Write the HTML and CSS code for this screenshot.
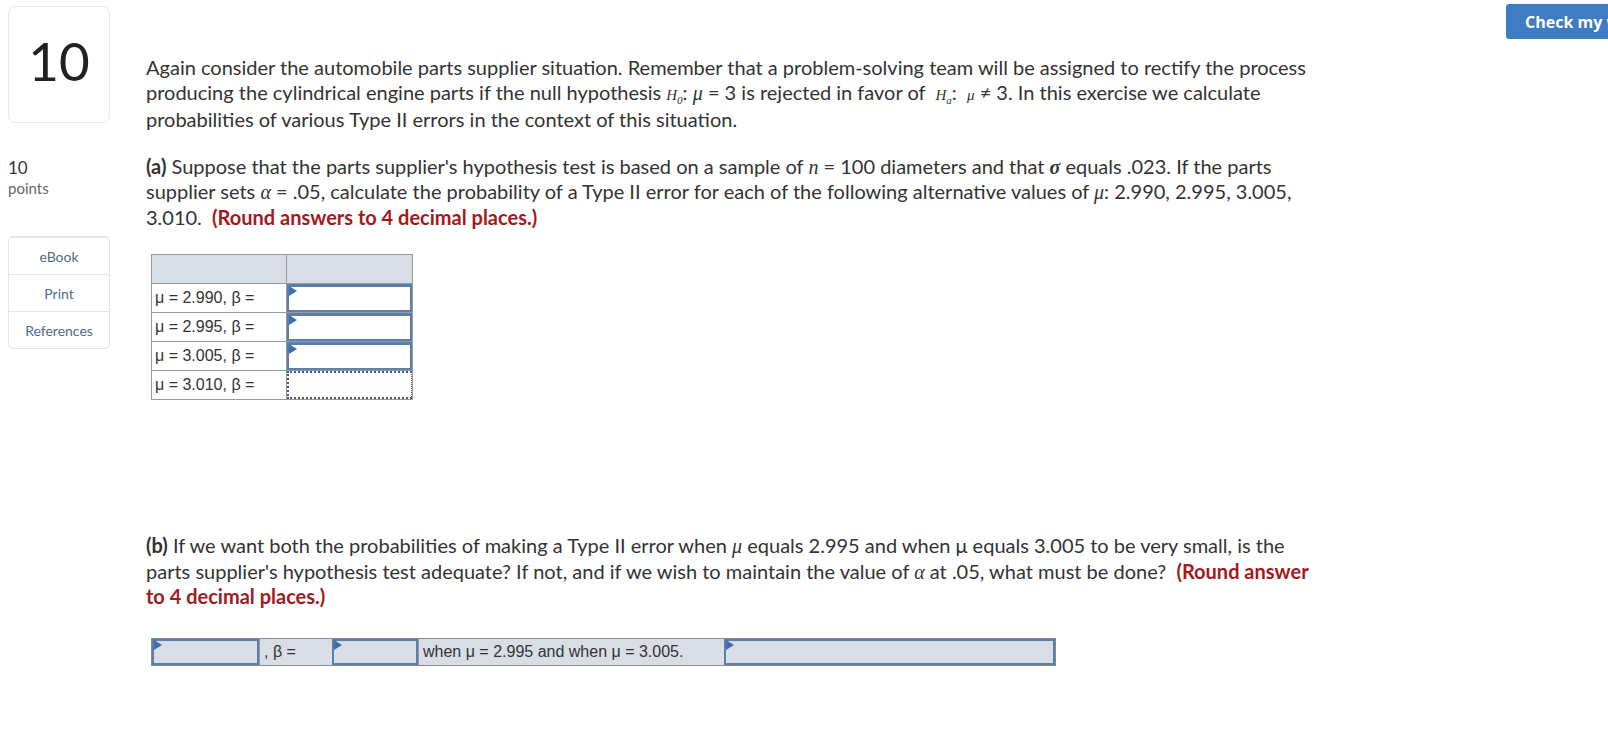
FILE: index.html
```html
<!DOCTYPE html>
<html>
<head>
<meta charset="utf-8">
<link rel="stylesheet" href="styles.css">
</head>
<body>
<button class="check-btn">Check my work</button>
<div class="page">
  <aside class="side">
    <div class="qnum">10</div>
    <div class="points"><div class="pts-num">10</div><div class="pts-label">points</div></div>
    <div class="tools">
      <div class="tool">eBook</div>
      <div class="tool">Print</div>
      <div class="tool">References</div>
    </div>
  </aside>
  <main class="main">
    <p class="para intro">Again consider the automobile parts supplier situation. Remember that a problem-solving team will be assigned to rectify the process producing the cylindrical engine parts if the null hypothesis <i class="h">H<sub>0</sub></i>: <i>μ</i> = 3 is rejected in favor of &nbsp;<i class="h">H<sub>a</sub></i>: &nbsp;<i class="mu-s">μ</i> ≠ 3. In this exercise we calculate probabilities of various Type II errors in the context of this situation.</p>
    <p class="para pa"><b>(a)</b> Suppose that the parts supplier's hypothesis test is based on a sample of <i>n</i> = 100 diameters and that <b><i>σ</i></b> equals .023. If the parts supplier sets <i>α</i> = .05, calculate the probability of a Type II error for each of the following alternative values of <i>μ</i>: 2.990, 2.995, 3.005, 3.010. &nbsp;<b class="red">(Round answers to 4 decimal places.)</b></p>
    <table class="tbl">
      <tr class="hdr"><td class="c1"></td><td class="c2"></td></tr>
      <tr><td class="c1">μ = 2.990, β =</td><td class="c2"><div class="inp"><span class="flag"></span></div></td></tr>
      <tr><td class="c1">μ = 2.995, β =</td><td class="c2"><div class="inp"><span class="flag"></span></div></td></tr>
      <tr><td class="c1">μ = 3.005, β =</td><td class="c2"><div class="inp"><span class="flag"></span></div></td></tr>
      <tr><td class="c1">μ = 3.010, β =</td><td class="c2"><div class="inp dotted"></div></td></tr>
    </table>
    <p class="para pb"><b>(b)</b> If we want both the probabilities of making a Type II error when <i>μ</i> equals 2.995 and when μ equals 3.005 to be very small, is the parts supplier's hypothesis test adequate? If not, and if we wish to maintain the value of <i>α</i> at .05, what must be done? &nbsp;<b class="red">(Round answer to 4 decimal places.)</b></p>
    <div class="brow">
      <div class="binp w1"><span class="flag"></span></div>
      <div class="btxt t1">, β =</div>
      <div class="binp w2"><span class="flag"></span></div>
      <div class="btxt t2">when μ = 2.995 and when μ = 3.005.</div>
      <div class="binp w3"><span class="flag"></span></div>
    </div>
  </main>
</div>
</body>
</html>
```

FILE: styles.css
```css
html, body { margin: 0; padding: 0; background: #fff; }
body { font-family: "Lato", "Open Sans", sans-serif; color: #333; width: 1608px; height: 745px; overflow: hidden; position: relative; }

.check-btn {
  position: absolute; left: 1506px; top: 4px; width: 180px; height: 35px;
  background: #3f7cc4; color: #fff; border: none; border-radius: 3px;
  font-family: "Open Sans", sans-serif; font-weight: 700; font-size: 16px;
  text-align: left; padding: 0 0 0 19px; white-space: nowrap;
}

.page { display: flex; }
.side { width: 102px; margin-left: 8px; padding-top: 6px; flex: none; }
.qnum {
  width: 102px; height: 117px; border: 1px solid #eaeaea; border-radius: 7px;
  display: flex; align-items: center; justify-content: center;
  font-size: 53px; color: #222; font-weight: 400; padding-bottom: 8px; box-sizing: border-box;
}
.points { margin-top: 35px; }
.pts-num { font-size: 17px; color: #333; line-height: 20px; }
.pts-label { font-size: 15px; color: #666; line-height: 20px; }
.tools { margin-top: 38px; border: 1px solid #e6e6e6; border-radius: 5px; width: 102px; box-sizing: border-box; }
.tool { height: 36px; display: flex; align-items: center; justify-content: center; font-size: 14px; color: #4f6c8a; border-top: 1px solid #e6e6e6; }

.main { margin-left: 36px; width: 1172px; padding-top: 55px; flex: none; }
.para { margin: 0; font-size: 20px; line-height: 24.5px; color: #333; }
.para i { font-style: italic; font-family: "Liberation Serif", serif; }
.para i.h { font-size: 15px; }
.para i.mu-s { font-size: 15px; }
.para sub { font-size: 11px; line-height: 0; }
.para b { font-weight: 700; }
.red { color: #a3191c; }
.pa { margin-top: 22px; }

.tbl { margin-top: 25px; margin-left: 5px; border-collapse: collapse; font-family: "Liberation Sans", Arial, sans-serif; font-size: 16px; color: #333; }
.tbl td { border: 1px solid #999; padding: 0; height: 28px; }
.tbl .c1 { width: 135px; padding-left: 3px; box-sizing: border-box; }
.tbl .c2 { width: 125px; position: relative; }
.tbl .hdr td { background: #d9dde6; height: 28px; }
.inp { height: 28px; border: 2px solid #5a7fa8; box-sizing: border-box; background: #fff; position: relative; border-top-width: 3px; }
.inp.dotted { border: 2px dotted #3a5f8a; border-right-width: 1px; }
.flag { position: absolute; left: 0; top: -1px; width: 0; height: 0; border-top: 5px solid transparent; border-bottom: 5px solid transparent; border-left: 8px solid #3b6fae; }

.pb { margin-top: 133px; }
.brow { margin-top: 29px; margin-left: 5px; width: 905px; height: 28px; display: flex; background: #d9dde6; border: 1px solid #888; box-sizing: border-box; font-family: "Liberation Sans", Arial, sans-serif; font-size: 16px; color: #333; }
.binp { height: 100%; border: 2px solid #5a7fa8; box-sizing: border-box; position: relative; background: #d9dde6; }
.w1 { width: 107px; }
.w2 { width: 86px; }
.w3 { flex: 1; }
.btxt { display: flex; align-items: center; padding-left: 4px; border-left: 1px solid #999; }
.t1 { width: 73px; box-sizing: border-box; }
.t2 { width: 306px; box-sizing: border-box; }
```
